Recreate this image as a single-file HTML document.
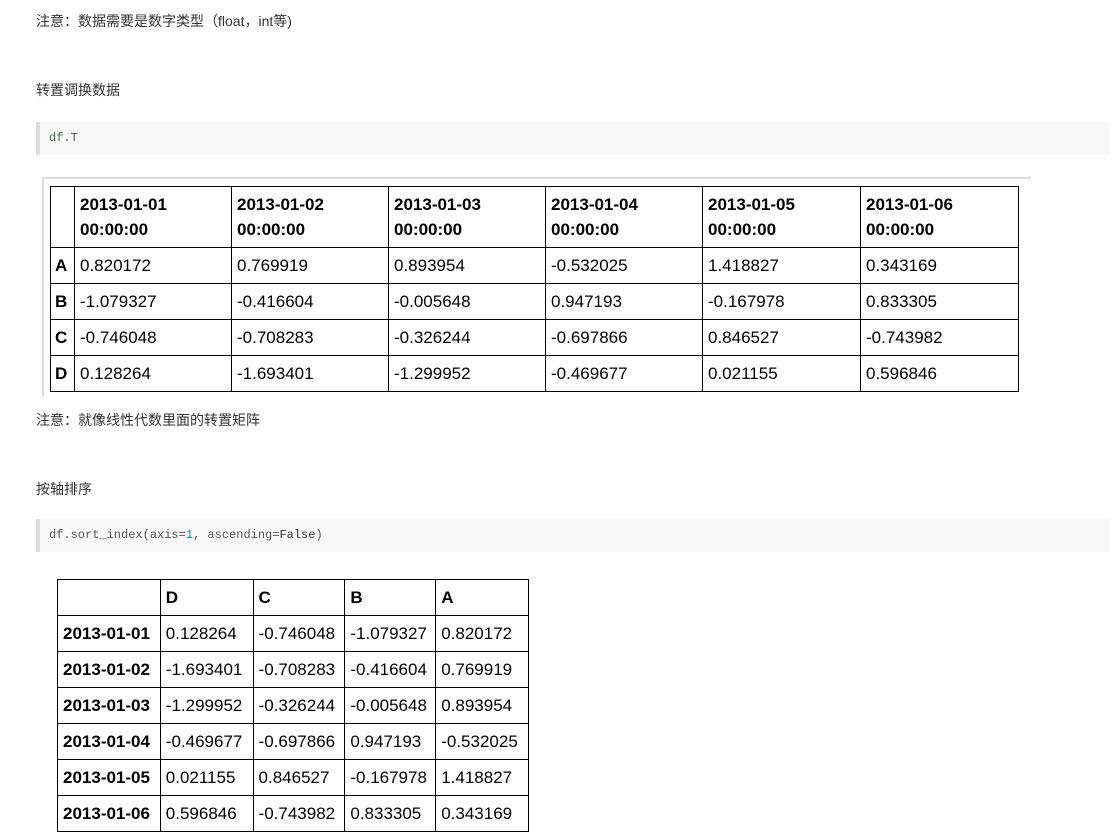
<!DOCTYPE html>
<html><head><meta charset="utf-8"><style>
body{margin:0;width:1115px;height:839px;background:#fff;position:relative;overflow:hidden;font-family:"Liberation Sans","Noto Sans CJK SC",sans-serif}
.p{position:absolute;left:36px;font-size:14px;color:#333;line-height:16px}
.code{position:absolute;left:36px;width:1074px;height:33px;background:#f8f8f8;border-left:4px solid #ddd;box-sizing:border-box;padding-left:9px;font-family:"Liberation Mono",monospace;font-size:12px;line-height:33px;color:#555}
table{position:absolute;border-collapse:collapse;font-size:17px;color:#000;font-family:"Liberation Sans",Arial,sans-serif}
td,th{border:1px solid #000;padding:0 5px;text-align:left;height:36px;box-sizing:border-box;white-space:nowrap}
th{font-weight:bold}
#t1 th.h{height:61px;line-height:25px;vertical-align:middle}
</style></head><body>
<div class="p" style="top:13px">注意：数据需要是数字类型（float，int等)</div>
<div class="p" style="top:82px">转置调换数据</div>
<div class="code" style="top:122px"><span style="color:#2a7a2a">df</span>.<span style="color:#555">T</span></div>
<div style="position:absolute;left:42px;top:177px;width:987px;height:217px;border-top:2px solid #ddd;border-left:2px solid #ddd"></div>
<table id="t1" style="left:50px;top:186px;width:969px">
<colgroup><col style="width:24px"><col style="width:157px"><col style="width:157px"><col style="width:157px"><col style="width:157px"><col style="width:158px"><col style="width:158px"></colgroup>
<tr><th class="h"></th><th class="h">2013-01-01<br>00:00:00</th><th class="h">2013-01-02<br>00:00:00</th><th class="h">2013-01-03<br>00:00:00</th><th class="h">2013-01-04<br>00:00:00</th><th class="h">2013-01-05<br>00:00:00</th><th class="h">2013-01-06<br>00:00:00</th></tr>
<tr><th style="padding:0 4px">A</th><td>0.820172</td><td>0.769919</td><td>0.893954</td><td>-0.532025</td><td>1.418827</td><td>0.343169</td></tr>
<tr><th style="padding:0 4px">B</th><td>-1.079327</td><td>-0.416604</td><td>-0.005648</td><td>0.947193</td><td>-0.167978</td><td>0.833305</td></tr>
<tr><th style="padding:0 4px">C</th><td>-0.746048</td><td>-0.708283</td><td>-0.326244</td><td>-0.697866</td><td>0.846527</td><td>-0.743982</td></tr>
<tr><th style="padding:0 4px">D</th><td>0.128264</td><td>-1.693401</td><td>-1.299952</td><td>-0.469677</td><td>0.021155</td><td>0.596846</td></tr>
</table>
<div class="p" style="top:412px">注意：就像线性代数里面的转置矩阵</div>
<div class="p" style="top:481px">按轴排序</div>
<div class="code" style="top:519px">df.sort_index(axis=<span style="color:#099">1</span>, ascending=<span style="color:#333">False</span>)</div>
<table style="left:57px;top:579px;width:472px">
<colgroup><col style="width:103px"><col style="width:93px"><col style="width:92px"><col style="width:91px"><col style="width:93px"></colgroup>
<tr><th></th><th>D</th><th>C</th><th>B</th><th>A</th></tr>
<tr><th>2013-01-01</th><td>0.128264</td><td>-0.746048</td><td>-1.079327</td><td>0.820172</td></tr>
<tr><th>2013-01-02</th><td>-1.693401</td><td>-0.708283</td><td>-0.416604</td><td>0.769919</td></tr>
<tr><th>2013-01-03</th><td>-1.299952</td><td>-0.326244</td><td>-0.005648</td><td>0.893954</td></tr>
<tr><th>2013-01-04</th><td>-0.469677</td><td>-0.697866</td><td>0.947193</td><td>-0.532025</td></tr>
<tr><th>2013-01-05</th><td>0.021155</td><td>0.846527</td><td>-0.167978</td><td>1.418827</td></tr>
<tr><th>2013-01-06</th><td>0.596846</td><td>-0.743982</td><td>0.833305</td><td>0.343169</td></tr>
</table>
</body></html>
